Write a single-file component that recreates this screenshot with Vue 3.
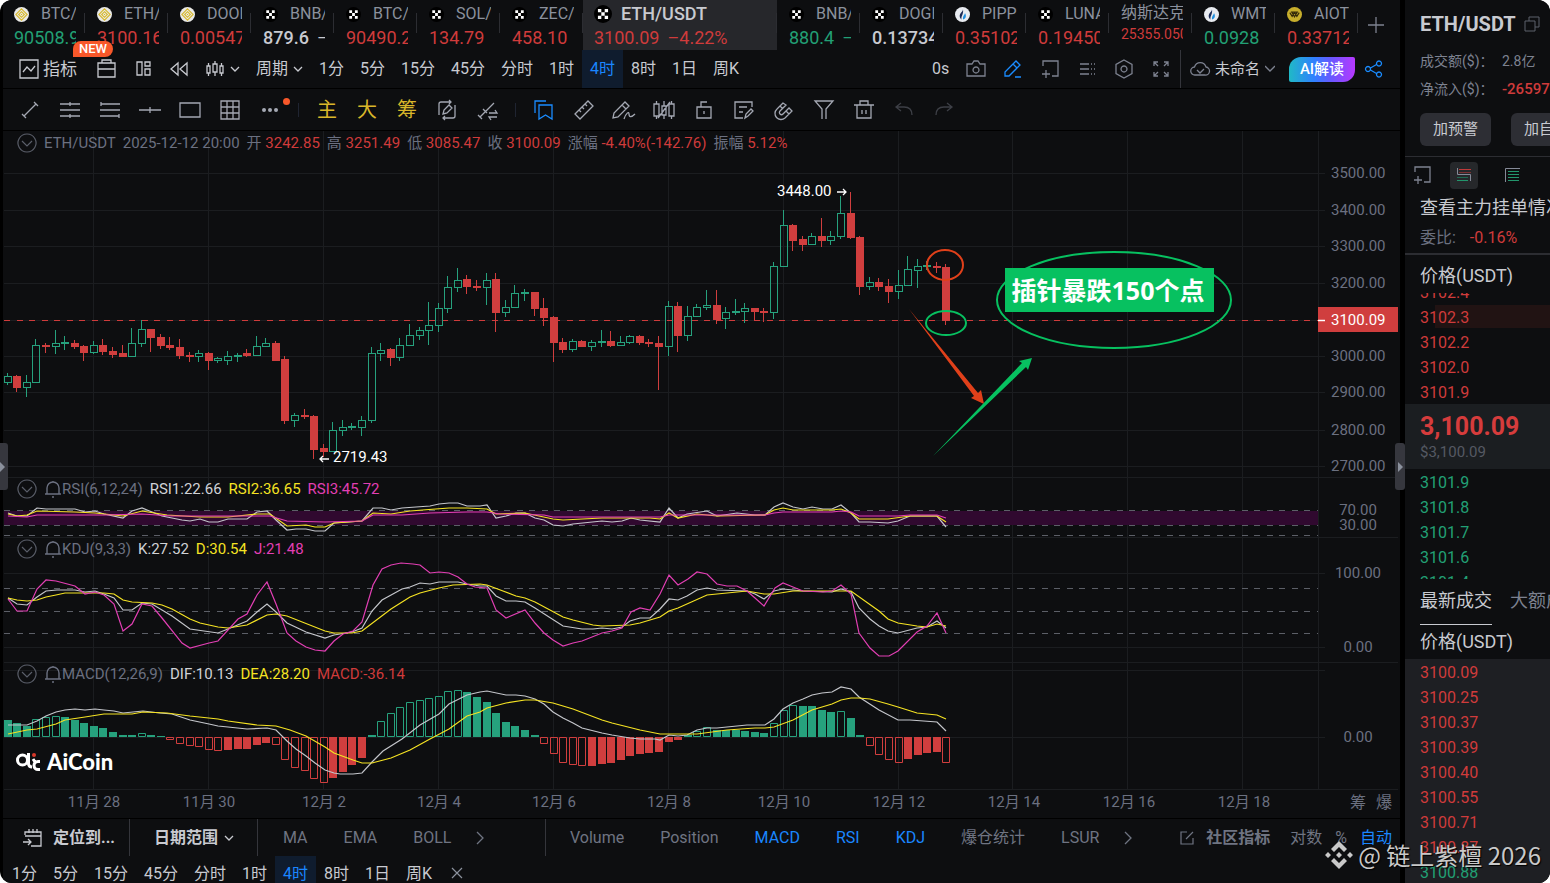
<template>
  <div class="terminal">
    <main class="workspace">
      <nav class="tickers">
        <a
          v-for="(t, index) in tickers"
          :key="index"
          href="#"
          class="ticker"
          :class="{ active: t.active, compact: t.compact }"
        >
          <span class="ticker-name">
            <svg v-if="t.logo" class="coin" viewBox="0 0 16 16" aria-hidden="true">
              <circle cx="8" cy="8" r="8" :fill="logoFill[t.logo]" />
              <g v-if="t.logo === 'bn'" fill="none" stroke="#d8b92c" stroke-width="1.2">
                <path d="M8 2 14 8 8 14 2 8ZM8 5l3 3-3 3-3-3Z" />
                <path d="M8 7.4v1.2" />
              </g>
              <path v-else-if="t.logo === 'ok'" fill="#fff" d="M3.5 3.5h3v3h-3zM9.500 3.500h3v3h-3zM6.500 6.500h3v3h-3zM3.500 9.500h3v3h-3zM9.500 9.500h3v3h-3z" />
              <g v-else-if="t.logo === 'hb'">
                <path fill="#1b2a55" d="M8.500 2c.4 2.500-3.500 4-3.500 7.500 0 1.800 1 3 2 3.700C6 10 9.500 8 8.500 2Z" />
                <path fill="#1f8fe0" d="M10.600 6.500c0 2-2.600 3-2 6.800 1.700-.3 3-1.700 3-3.700 0-1.300-.4-2.300-1-3.100Z" />
              </g>
              <path v-else fill="none" stroke="#33290a" stroke-width="1.200" d="M3 6l2.500 4L8 6l2.500 4L13 6M5 5.500h6L8 10.500Z" />
            </svg>
            <span>{{ t.name }}</span>
          </span>
          <span class="ticker-price" :class="t.tone">{{ t.price }}<i v-if="t.change">{{ t.change }}</i></span>
        </a>
        <button class="add-ticker" aria-label="添加">
          <svg class="icon" viewBox="0 0 20 20"><path d="M10 2V18M2 10H18" /></svg>
        </button>
      </nav>

      <div class="toolbar">
        <button class="indicator-btn">
          <svg class="icon" viewBox="0 0 20 20"><path :d="icons.chart" /></svg>
          指标
          <span class="new-badge">NEW</span>
        </button>
        <button v-for="name in ['briefcase', 'layout', 'rewind']" :key="name" class="icon-btn" :aria-label="name">
          <svg class="icon" viewBox="0 0 20 20"><path :d="icons[name]" /></svg>
        </button>
        <button class="menu-btn" aria-label="kline">
          <svg class="icon" viewBox="0 0 20 20"><path :d="icons.kline" /></svg>
          <svg class="chevron" viewBox="0 0 10 10"><path d="M1 3l4 4 4-4" /></svg>
        </button>
        <button class="menu-btn period-menu">
          周期
          <svg class="chevron" viewBox="0 0 10 10"><path d="M1 3l4 4 4-4" /></svg>
        </button>
        <button v-for="p in periods" :key="p" class="period" :class="{ on: p === period }" @click="period = p">{{ p }}</button>

        <div class="toolbar-right">
          <span class="countdown">0s</span>
          <button
            v-for="name in ['camera', 'pencil', 'addBox', 'list', 'hex', 'expand']"
            :key="name"
            class="icon-btn wide muted"
            :class="{ blue: name === 'pencil' }"
            :aria-label="name"
          >
            <svg class="icon" viewBox="0 0 20 20"><path :d="icons[name]" /></svg>
          </button>
          <button class="layout-btn">
            <svg class="icon muted" viewBox="0 0 20 20"><path :d="icons.cloud" /></svg>
            未命名
            <svg class="chevron muted" viewBox="0 0 10 10"><path d="M0 2l5 5 5-5" /></svg>
          </button>
          <button class="ai-btn">AI解读</button>
          <button class="share-btn" aria-label="share">
            <svg class="icon blue" viewBox="0 0 20 20"><path :d="icons.share" /></svg>
          </button>
        </div>
      </div>

      <div class="drawbar">
        <template v-for="tool in tools" :key="tool">
          <span v-if="tool.startsWith('|')" class="separator"></span>
          <button v-else-if="tool.length === 1" class="draw-btn gold">{{ tool }}</button>
          <button v-else class="draw-btn" :class="tool" :aria-label="tool">
            <svg class="icon" viewBox="0 0 20 20"><path :d="icons[tool]" /></svg>
            <span v-if="tool === 'more'" class="dot"></span>
          </button>
        </template>
      </div>

      <section class="pane">
        <svg class="plot" viewBox="3 131 1397 346">
          <path class="grid" :d="gridColumns(131, 477)" />
          <path class="grid" :d="gridRows([173, 210, 246, 283, 320, 356, 392, 430, 466])" />
          <path class="last-price" d="M4 320.500H1318" />
          <g v-for="(c, i) in candles" :key="i" :class="c[0] ? 'up' : 'down'">
            <path :d="`M${x(i) - 0.5} ${c[1]}V${c[2]}M${x(i) - 0.5} ${c[3]}V${c[4]}`" />
            <rect :x="x(i) - 3.5" :y="c[2] + 0.5" width="7" :height="Math.max(c[3] - c[2] - 1, 1)" />
          </g>
          <text class="mark" x="777" y="196">3448.00</text>
          <path class="mark-arrow" d="M837 192H846M843 189l3 3-3 3" />
          <text class="mark" x="333" y="462">2719.43</text>
          <path class="mark-arrow" d="M329 459H320M323 456l-3 3 3 3" />
          <text v-for="(p, i) in priceTicks" :key="p" class="tick" x="1331" :y="priceTickY[i]">{{ p }}</text>
          <rect x="1318" y="307" width="80" height="25" fill="#d03e3e" />
          <path d="M1318 320.500H1325" stroke="#fff" stroke-width="1.500" />
          <text class="tick-now" x="1331" y="325">3100.09</text>
          <ellipse class="note orange" cx="945" cy="265" rx="18" ry="15" />
          <ellipse class="note" cx="946" cy="323" rx="20" ry="12" />
          <ellipse class="note" cx="1114" cy="300" rx="117" ry="48" />
          <rect x="1005" y="268" width="209" height="44" fill="#07c160" />
          <text class="note-text" x="1108" y="300">插针暴跌150个点</text>
          <path fill="#e0401a" d="M909 309 978 393 981 390 984 404 971 398 974 396Z" />
          <path fill="#07c160" d="M933 456 1022 363 1019 361 1032 358 1028 370 1026 367Z" />
        </svg>
        <div class="legend">
          <svg class="fold" viewBox="0 0 20 20"><path :d="icons.fold" /></svg>
          <span>ETH/USDT</span>
          <span>2025-12-12 20:00</span>
          <span v-for="o in ohlc" :key="o[0]">{{ o[0] }} <b class="red">{{ o[1] }}</b></span>
        </div>
      </section>

      <section v-for="pane in panes" :key="pane.id" class="pane">
        <svg class="plot" :viewBox="`3 ${pane.top} 1397 ${pane.height}`">
          <path class="grid" :d="`M4 ${pane.top + 0.5}H1398`" />
          <path class="grid" :d="gridColumns(pane.top, pane.top + pane.height)" />
          <path class="grid" :d="gridRows(pane.rows)" />
          <rect v-if="pane.id === 'rsi'" x="4" y="511" width="1314" height="14" fill="#30092f" />
          <path v-for="y in pane.dashes" :key="y" class="dash" :d="`M4 ${y + 0.5}H1318`" />
          <template v-if="pane.id === 'macd'">
            <path
              v-for="(h, i) in bars"
              :key="i"
              class="bar"
              :class="[h > 0 ? 'pos' : 'neg', { hollow: hollow.includes(i) }]"
              :d="barPath(h, i)"
            />
          </template>
          <polyline v-for="line in pane.lines" :key="line.color" :points="line.points" :stroke="line.color" class="series" />
          <text v-for="t in pane.ticks" :key="t[1]" class="tick middle" x="1358" :y="t[1]">{{ t[0] }}</text>
          <g v-if="pane.id === 'macd'" class="brand">
            <circle cx="22.500" cy="760" r="5" />
            <path d="M28.500 753V764Q29 767 32 767" />
            <path d="M40 761.500H38a4 4 0 0 0 0 8H40M33 759l2 3" />
            <circle class="brand-dot" cx="34" cy="755" r="2" />
            <text x="47" y="770">AiCoin</text>
          </g>
        </svg>
        <div class="legend">
          <svg class="fold" viewBox="0 0 20 20"><path :d="icons.fold" /></svg>
          <span class="legend-name">
            <svg class="bell" viewBox="0 0 18 18"><path d="M1 14H17M3 14V8a6 6 0 0 1 12 0v6M8 17h2M9 2V1" /></svg>
            {{ pane.name }}
          </span>
          <span v-for="v in pane.values" :key="v[0]" :class="v[1]">{{ v[0] }}</span>
        </div>
      </section>

      <svg class="plot" viewBox="3 789 1397 29">
        <path class="grid" d="M4 789.500H1398" />
        <text v-for="(d, i) in dates" :key="d" class="tick middle" :x="94 + i * 115" y="807">{{ d }}</text>
        <text class="tick large" x="1350" y="808">筹</text>
        <text class="tick large" x="1376" y="808">爆</text>
      </svg>

      <div class="bottombar">
        <button class="locate">
          <svg class="icon" viewBox="0 0 20 20"><path :d="icons.locate" /></svg>
          定位到...
        </button>
        <button class="range">
          日期范围
          <svg class="chevron" viewBox="0 0 10 10"><path d="M1 3l4 4 4-4" /></svg>
        </button>
        <div class="studies main-studies">
          <button v-for="s in ['MA', 'EMA', 'BOLL']" :key="s">{{ s }}</button>
          <svg class="next" viewBox="0 0 8 14"><path d="M1 1l6 6-6 6" /></svg>
        </div>
        <div class="studies">
          <button v-for="s in subStudies" :key="s" :class="{ on: activeStudies.includes(s) }">{{ s }}</button>
          <svg class="next" viewBox="0 0 8 14"><path d="M1 1l6 6-6 6" /></svg>
        </div>
        <div class="scale">
          <button class="community">
            <svg viewBox="0 0 14 14"><path d="M7 1H1V13H13V7M6 8l7-7" /></svg>
            社区指标
          </button>
          <button>对数</button>
          <button>%</button>
          <button class="on">自动</button>
        </div>
      </div>

      <div class="quick-periods">
        <button v-for="p in periods" :key="p" class="period" :class="{ on: p === period }" @click="period = p">{{ p }}</button>
        <button class="close" aria-label="close">
          <svg viewBox="0 0 12 12"><path d="M1 1l10 10M11 1 1 11" /></svg>
        </button>
      </div>
    </main>

    <aside class="sidebar">
      <h1>
        ETH/USDT
        <svg viewBox="0 0 16 16"><path d="M1 5H11V15H1ZM5 5V1H15V11H11" /></svg>
      </h1>
      <p class="stat"><span>成交额($)：</span><span>2.8亿</span></p>
      <p class="stat"><span>净流入($)：</span><b class="red">-26597</b></p>
      <div class="actions">
        <button>加预警</button>
        <button>加自选</button>
      </div>
      <div class="modes">
        <button aria-label="add"><svg class="icon" viewBox="0 0 20 20"><path :d="icons.addBox" /></svg></button>
        <button class="selected" aria-label="both">
          <svg viewBox="0 0 16 16"><path d="M1.500 1V7.500H14.500V14" stroke="#858a98" /><path d="M3 2.500H15" stroke="#c03a3a" /><path d="M3 5.500H15" stroke="#7c2f31" /><path d="M1 10.500H12" stroke="#1e6a50" /><path d="M1 13.500H12" stroke="#23956c" /></svg>
        </button>
        <button aria-label="bids">
          <svg viewBox="0 0 16 16"><path d="M1.500 15V1.500H16" stroke="#858a98" /><path d="M4 4.500H15M4 7.500H15M4 10.500H15M4 13.500H15" stroke="#23956c" /></svg>
        </button>
      </div>
      <p class="whale">查看主力挂单情况</p>
      <p class="ratio">委比: <b class="red">-0.16%</b></p>
      <h2 class="book-head">价格(USDT)</h2>
      <ul class="book asks">
        <li v-for="p in asks" :key="p" :class="{ depth: p === '3102.3' }">{{ p }}</li>
      </ul>
      <div class="last">
        <strong>3,100.09</strong>
        <span>$3,100.09</span>
      </div>
      <ul class="book bids">
        <li v-for="p in bids" :key="p">{{ p }}</li>
      </ul>
      <div class="tabs">
        <button class="current">最新成交</button>
        <button>大额成交</button>
      </div>
      <h2 class="trades-head">价格(USDT)</h2>
      <ul class="book trades">
        <li v-for="(p, i) in trades" :key="p" :class="{ buy: i === trades.length - 1 }">{{ p }}</li>
      </ul>
    </aside>

    <button class="handle left" aria-label="expand left"><svg viewBox="0 0 5 10"><path d="M0 0 5 5 0 10Z" /></svg></button>
    <button class="handle right" aria-label="collapse right"><svg viewBox="0 0 5 10"><path d="M0 0 5 5 0 10Z" /></svg></button>

    <div class="watermark">
      <svg viewBox="0 0 28 28">
        <path d="M14 0 22 8 19 11 14 6 9 11 6 8ZM14 28 22 20 19 17 14 22 9 17 6 20ZM3 11 6 14 3 17 0 14ZM25 11 28 14 25 17 22 14ZM14 11 17 14 14 17 11 14Z" />
      </svg>
      @ 链上紫檀 2026
    </div>
  </div>
</template>

<script setup>
import { ref } from 'vue'

const period = ref('4时')
const periods = ['1分', '5分', '15分', '45分', '分时', '1时', '4时', '8时', '1日', '周K']

const logoFill = { bn: '#e9e9e6', ok: '#000', hb: '#e8ebf0', wo: '#c7ae2c' }

const tickers = [
  { name: 'BTC/USDT', price: '90508.9', tone: 'green', logo: 'bn' },
  { name: 'ETH/USDT', price: '3100.16', tone: 'red', logo: 'bn' },
  { name: 'DOOD/USDT', price: '0.00547', tone: 'red', logo: 'bn' },
  { name: 'BNB/USDT', price: '879.6', change: '–0', tone: 'flat', logo: 'ok' },
  { name: 'BTC/USDT', price: '90490.2', tone: 'red', logo: 'ok' },
  { name: 'SOL/USDT', price: '134.79', tone: 'red', logo: 'ok' },
  { name: 'ZEC/USDT', price: '458.10', tone: 'red', logo: 'ok' },
  { name: 'ETH/USDT', price: '3100.09', change: '–4.22%', tone: 'red', logo: 'ok', active: true },
  { name: 'BNB/USDT', price: '880.4', change: '–0', tone: 'green', logo: 'ok' },
  { name: 'DOGE/USDT', price: '0.13734', tone: 'flat', logo: 'ok' },
  { name: 'PIPPIN', price: '0.35102', tone: 'red', logo: 'hb' },
  { name: 'LUNA/USDT', price: '0.19450', tone: 'red', logo: 'ok' },
  { name: '纳斯达克指数', price: '25355.050', tone: 'red', compact: true },
  { name: 'WMTX', price: '0.0928', tone: 'green', logo: 'hb' },
  { name: 'AIOT', price: '0.33712', tone: 'red', logo: 'wo' }
]

const icons = {
  chart: 'M1 1H19V19H1ZM4 13l4-5 4 4 4-5',
  briefcase: 'M1 4H18V18H1ZM1 10H18M5 4V1H14V4',
  layout: 'M4 3H9V16H4ZM12 3H17V7H12ZM12 10H17V16H12Z',
  rewind: 'M9 4 2 10 9 16ZM18 4 11 10 18 16Z',
  kline: 'M2 7H5V14H2ZM3.5 4V7M3.5 14V17M8 5H12V13H8ZM10 2V5M10 13V17M15 7H18V14H15ZM16.5 4V7M16.5 14V17',
  camera: 'M1 5H6L8 2H12L14 5H19V17H1ZM10 8a3 3 0 1 0 .01 0Z',
  pencil: 'M2 17V13L13 2 17 6 6 17ZM10 5l4 4M12 18H18',
  addBox: 'M3 7V2H18V17H12M6 11V19M2 15H10',
  list: 'M3 5H12M3 10H12M3 15H12M14 5h1M17 5h1M14 10h1M17 10h1M14 15h1M17 15h1',
  hex: 'M10 1 18 5.500V14.500L10 19 2 14.500V5.500ZM10 7a3 3 0 1 0 .01 0Z',
  expand: 'M3 7V3H7M13 3H17V7M17 13V17H13M7 17H3V13M3 3l4 4M17 3l-4 4M17 17l-4-4M3 17l4-4',
  cloud: 'M5 16a4 4 0 0 1-.5-8A6 6 0 0 1 16 8a4 4 0 0 1-1 8ZM7 11l3 3 4-4',
  share: 'M4 7.500a2.500 2.500 0 1 0 .01 0ZM15 2a2.500 2.500 0 1 0 .01 0ZM15 13a2.500 2.500 0 1 0 .01 0ZM6.500 9 12.500 5.500M6.500 11 12.500 14.500',
  line: 'M4 16 16 4M2 14l4 4M14 2l4 4',
  parallel: 'M0 4H20M0 10H20M0 16H20M10 2V6M10 14V18',
  channel: 'M1 4H20M0 10H20M0 16H19M1 2V6M19 14V18',
  level: 'M-1 10H21M10 7V13',
  rect: 'M0 3H20V17H0Z',
  table: 'M1 1H19V19H1ZM7 1V19M13 1V19M1 7H19M1 13H19',
  more: 'M4 10h.01M10 10h.01M16 10h.01',
  cycle: 'M14 2H4Q2 2 2 4V15M18 5V16Q18 18 16 18H6M12 0l2 2-2 2M8 16l-2 2 2 2M6 14l1-4 5-5 3 3-5 5Z',
  swap: 'M3 17 17 3M1 15l4 4M6 9l4 4M12 13h8l-2-3M20 17h-8l2 3',
  bookmark: 'M1 13V1H12M5 5H18V19L11.500 15 5 19Z',
  ruler: 'M1 14 14 1 19 6 6 19ZM5 10l2 2M8 7l2 2M11 4l2 2',
  scribble: 'M-1 18 0 13 11 2 15 6 4 17ZM8 5l4 4M10 19c2-6 5-8 5-5s2 4 6 0',
  compare: 'M0 4H5V16H0ZM2.500 1V4M2.500 16V19M8 6H12V15H8ZM10 1V6M10 15V19M15 4H20V16H15ZM17.500 1V4M17.500 16V19M4 18 16 2',
  lock: 'M3 7H17V18H3ZM10 11V14M7 7V2H13',
  note: 'M18 7V2H1V18H9M5 7H13M5 12H9M11 18l1-4 5-5 2 2-5 5Z',
  magnet: 'M9 3 3 9a6 6 0 0 0 8 9l7-7-3-3-6 6a2 2 0 0 1-3-3l6-6ZM6 6l3 3M12 11l3 3',
  funnel: 'M12 19V9L19 1H1L8 9V19',
  trash: 'M0 5H20M6 5V1H14V5M3 5V18H17V5M8 10V14M12 10V14',
  undo: 'M7 3 2 7l5 4M2 7H10Q18 7 18 15',
  redo: 'M13 3 18 7l-5 4M18 7H10Q2 7 2 15',
  locate: 'M2 7V4H18V18H8M2 8H18M6 1V5M10 1V5M14 1V5M0 14H8M5 11l3 3-3 3',
  fold: 'M10 1a9 9 0 1 0 .01 0ZM5 8l5 5 5-5'
}

const tools = [
  'line', 'parallel', 'channel', 'level', 'rect', 'table', 'more', '|1',
  '主', '大', '筹', 'cycle', 'swap', '|2',
  'bookmark', 'ruler', 'scribble', 'compare', 'lock', 'note', 'magnet', 'funnel', 'trash', 'undo', 'redo'
]

const ohlc = [
  ['开', '3242.85'],
  ['高', '3251.49'],
  ['低', '3085.47'],
  ['收', '3100.09'],
  ['涨幅', '-4.40%(-142.76)'],
  ['振幅', '5.12%']
]

const x = (i) => Math.round(7.6 + i * 9.58)
const gridColumns = (top, bottom) =>
  [93, 208, 323, 438, 553, 668, 783, 898, 1012, 1127, 1242, 1318].map((c) => `M${c + 0.5} ${top}V${bottom}`).join('')
const gridRows = (rows) => rows.map((r) => `M4 ${r + 0.5}H1325`).join('')

const priceTicks = ['3500.00', '3400.00', '3300.00', '3200.00', '3000.00', '2900.00', '2800.00', '2700.00']
const priceTickY = [178, 215, 251, 288, 361, 397, 435, 471]
const dates = ['11月 28', '11月 30', '12月 2', '12月 4', '12月 6', '12月 8', '12月 10', '12月 12', '12月 14', '12月 16', '12月 18']

// rising flag, high, body top, body bottom, low
const candles = [
  [1, 373, 376, 383, 385], [0, 375, 376, 388, 392], [1, 375, 382, 388, 397], [1, 339, 345, 383, 383],
  [0, 343, 345, 347, 353], [1, 330, 343, 347, 354], [1, 336, 342, 344, 350], [0, 340, 343, 347, 349],
  [0, 345, 346, 353, 361], [1, 341, 345, 353, 354], [0, 339, 345, 352, 355], [0, 347, 351, 355, 358],
  [0, 345, 353, 357, 357], [1, 328, 343, 357, 357], [1, 320, 329, 344, 347], [0, 329, 329, 338, 352],
  [0, 334, 337, 346, 349], [0, 337, 345, 348, 350], [0, 339, 347, 356, 359], [0, 352, 355, 357, 362],
  [1, 350, 353, 357, 362], [0, 352, 353, 361, 370], [1, 357, 358, 361, 363], [1, 351, 356, 361, 365],
  [1, 353, 355, 357, 362], [0, 349, 353, 356, 357], [1, 336, 346, 356, 356], [1, 338, 343, 347, 347],
  [0, 341, 343, 361, 361], [0, 356, 359, 421, 424], [1, 413, 415, 421, 427], [0, 409, 415, 417, 419],
  [0, 415, 416, 450, 459], [0, 444, 448, 452, 457], [1, 422, 430, 452, 452], [1, 420, 427, 431, 436],
  [1, 423, 426, 428, 430], [1, 416, 420, 428, 436], [1, 347, 353, 421, 423], [1, 343, 350, 354, 361],
  [0, 348, 349, 358, 366], [1, 338, 345, 358, 361], [1, 324, 335, 346, 346], [1, 327, 330, 336, 340],
  [1, 302, 325, 331, 345], [1, 303, 308, 326, 332], [1, 276, 287, 309, 313], [1, 268, 280, 288, 292],
  [0, 275, 279, 287, 294], [0, 280, 286, 288, 291], [1, 273, 280, 288, 305], [0, 273, 279, 313, 332],
  [1, 300, 307, 313, 317], [1, 285, 293, 308, 308], [1, 289, 292, 294, 301], [0, 292, 292, 309, 316],
  [0, 298, 308, 318, 326], [0, 316, 317, 343, 362], [0, 338, 342, 350, 353], [1, 339, 341, 350, 352],
  [0, 340, 341, 347, 347], [1, 340, 342, 347, 351], [1, 330, 341, 343, 347], [0, 331, 341, 346, 347],
  [1, 336, 342, 346, 346], [1, 335, 336, 343, 344], [0, 335, 336, 343, 345], [0, 339, 342, 344, 347],
  [0, 336, 343, 347, 390], [1, 301, 306, 347, 356], [0, 302, 306, 336, 352], [1, 306, 316, 336, 341],
  [1, 304, 307, 317, 317], [1, 290, 305, 308, 310], [0, 290, 305, 320, 324], [1, 307, 312, 319, 329],
  [1, 299, 311, 313, 315], [1, 303, 308, 312, 323], [0, 308, 308, 312, 321], [0, 308, 311, 313, 322],
  [1, 262, 266, 313, 319], [1, 210, 225, 267, 267], [0, 224, 225, 241, 251], [0, 236, 239, 245, 251],
  [1, 233, 236, 245, 245], [0, 218, 236, 241, 247], [1, 231, 236, 241, 245], [1, 196, 213, 237, 239],
  [0, 192, 213, 238, 239], [0, 236, 237, 287, 295], [1, 277, 282, 287, 290], [0, 278, 282, 287, 291],
  [0, 279, 286, 292, 303], [1, 270, 285, 292, 299], [1, 256, 269, 286, 286], [1, 259, 266, 271, 288],
  [1, 261, 265, 267, 270], [0, 262, 266, 268, 273], [0, 264, 267, 321, 325]
]

const bars = [
  17, 14, 11, 18, 20, 21, 20, 17, 14, 11, 9, 5, 2, 2, 4, 2, 1, -3, -7, -9, -10, -13, -14, -13, -12, -12, -8, -6, -8,
  -23, -31, -34, -42, -46, -41, -35, -28, -21, 2, 16, 24, 30, 35, 37, 39, 41, 46, 47, 45, 40, 35, 24, 15, 11, 7, 2,
  -7, -17, -26, -28, -29, -29, -27, -26, -23, -19, -17, -16, -15, -5, -3, 2, 6, 10, 7, 7, 7, 6, 5, 4, 14, 27, 32, 31,
  31, 27, 25, 26, 19, 2, -9, -18, -23, -26, -22, -18, -16, -15, -26
]
const hollow = [
  3, 4, 5, 14, 17, 18, 19, 20, 21, 22, 28, 29, 30, 31, 32, 33, 39, 40, 41, 42, 43, 44, 45, 46, 47,
  56, 57, 58, 59, 60, 72, 73, 80, 81, 82, 87, 90, 91, 92, 93, 98
]

// the outline is drawn inside the bar, so hollow bars are inset by half a stroke
const barPath = (h, i) => {
  const inset = hollow.includes(i) ? 0.5 : 0
  const left = x(i) - 4 + inset
  const top = (h > 0 ? 737 - h : 737) + inset
  const width = 8 - inset * 2
  return `M${left} ${top}h${width}v${Math.abs(h) - inset * 2}h${-width}Z`
}

const white = '#c4c6cb'
const yellow = '#f5e323'
const pink = '#e23fb4'

const panes = [
  {
    id: 'rsi',
    name: 'RSI(6,12,24)',
    top: 477,
    height: 60,
    rows: [],
    dashes: [510, 525, 535],
    ticks: [['70.00', 515], ['30.00', 530]],
    values: [['RSI1:22.66', 'white'], ['RSI2:36.65', 'yellow'], ['RSI3:45.72', 'pink']],
    lines: [
      {
        color: white,
        points: '8,513 17,516 27,516 37,508 46,509 75,509 85,512 95,511 104,514 123,518 132,511 142,508 162,516 182,520 190,521 200,519 209,522 218,522 228,519 247,519 257,512 267,511 276,520 287,530 296,529 306,529 315,531 325,531 334,523 362,521 373,508 382,508 391,510 402,508 430,506 439,504 449,503 458,503 467,506 480,506 487,505 496,518 506,516 516,513 525,513 535,518 544,520 553,525 563,526 573,524 602,521 612,522 622,521 631,518 640,520 660,522 669,508 678,518 687,514 707,511 717,516 737,513 755,515 765,515 774,507 783,503 793,507 803,509 812,507 823,509 832,509 841,505 851,513 859,522 870,522 888,523 898,521 910,516 937,516 946,527'
      },
      {
        color: yellow,
        points: '8,514 17,516 27,515 37,511 75,512 95,513 123,516 142,511 167,515 200,517 228,517 257,514 270,514 287,526 306,525 315,527 325,527 334,523 362,521 373,513 391,514 410,511 449,508 467,508 487,509 496,514 525,513 553,519 563,520 602,518 650,518 660,519 669,513 678,518 697,514 717,516 765,515 774,510 783,508 793,510 832,510 841,509 851,513 859,519 888,519 910,516 937,516 946,522'
      },
      {
        color: pink,
        points: '8,516 27,517 37,515 104,515 142,514 172,516 247,516 270,516 287,521 325,522 362,521 373,515 402,515 430,513 467,512 487,512 500,514 544,515 553,517 602,517 660,517 669,515 765,515 774,513 783,512 832,512 841,511 851,512 859,516 898,516 910,515 937,515 946,518'
      }
    ]
  },
  {
    id: 'kdj',
    name: 'KDJ(9,3,3)',
    top: 537,
    height: 125,
    rows: [573, 647],
    dashes: [588, 611, 633],
    ticks: [['100.00', 578], ['0.00', 652]],
    values: [['K:27.52', 'white'], ['D:30.54', 'yellow'], ['J:21.48', 'pink']],
    lines: [
      {
        color: white,
        points: '8,598 17,604 27,605 37,597 46,591 57,590 75,590 85,592 95,591 104,594 114,598 123,610 132,610 142,603 152,604 172,616 190,629 218,633 228,629 247,621 257,612 267,604 276,612 287,623 306,632 325,638 334,635 352,632 362,628 372,611 382,600 402,589 410,587 420,583 430,584 439,582 458,582 467,584 480,586 487,586 496,596 506,601 516,601 525,602 535,608 563,626 582,629 593,629 602,628 612,629 622,627 630,621 640,618 650,618 660,609 669,599 678,600 687,596 697,590 707,588 717,590 747,591 755,594 764,599 774,591 783,589 803,591 832,592 841,589 851,592 859,608 870,619 879,626 888,631 898,633 917,628 927,627 937,621 946,628'
      },
      {
        color: yellow,
        points: '8,598 17,600 27,601 37,600 46,597 56,595 65,593 104,593 114,594 123,600 132,602 152,603 162,605 172,609 190,619 200,623 218,627 228,628 247,625 267,615 276,614 287,616 325,631 334,633 352,633 362,631 391,609 410,597 420,593 439,588 453,585 480,584 487,585 516,596 525,598 535,602 563,617 573,620 593,625 602,626 630,625 640,623 650,620 660,617 669,611 678,608 707,595 727,593 747,591 764,594 774,594 793,591 851,591 879,611 888,619 898,623 917,626 927,627 937,624 946,626'
      },
      {
        color: pink,
        points: '8,599 17,611 27,611 37,589 46,580 56,581 75,586 85,594 95,592 104,595 114,604 123,631 132,624 142,604 152,606 162,618 182,643 190,648 209,643 218,641 238,619 247,614 257,595 267,582 276,604 287,633 296,641 306,647 315,650 325,651 334,641 343,634 353,631 362,622 373,585 382,569 391,565 401,563 413,564 420,565 430,573 439,572 449,573 458,577 467,584 475,587 487,588 496,610 506,618 525,610 535,623 544,633 553,640 563,646 573,643 582,641 592,637 602,633 612,631 622,628 631,612 640,608 650,610 660,594 669,575 678,585 688,579 697,572 707,574 717,584 727,586 737,586 747,591 755,598 764,606 775,588 783,583 793,587 803,591 823,592 832,591 841,585 851,594 859,633 870,648 879,656 889,656 898,651 917,632 927,626 937,613 946,633'
      }
    ]
  },
  {
    id: 'macd',
    name: 'MACD(12,26,9)',
    top: 662,
    height: 127,
    rows: [670, 737],
    dashes: [],
    ticks: [['0.00', 742]],
    values: [['DIF:10.13', 'white'], ['DEA:28.20', 'yellow'], ['MACD:-36.14', 'red']],
    lines: [
      {
        color: white,
        points: '8,725 27,725 37,721 46,716 56,712 65,710 75,709 85,710 95,709 104,710 114,711 123,713 143,711 160,713 172,714 190,720 209,724 218,726 228,727 247,729 267,728 276,730 287,741 296,749 306,756 315,763 325,770 334,773 340,774 353,774 362,773 372,762 383,751 402,739 420,725 439,714 449,704 467,695 480,692 487,691 506,695 516,695 525,696 535,699 544,704 553,712 563,718 573,723 582,728 602,733 612,735 630,738 640,739 655,739 660,740 669,735 678,736 687,735 697,730 707,728 717,728 727,727 747,725 765,725 774,719 783,709 793,703 803,699 812,695 822,693 832,692 841,687 851,689 859,697 879,710 898,720 910,720 937,722 946,731'
      },
      {
        color: yellow,
        points: '8,734 27,730 37,729 56,724 65,720 85,717 104,714 132,714 143,712 167,713 190,716 218,719 228,721 257,725 276,726 290,730 306,736 325,747 334,753 353,760 362,763 372,763 391,758 410,750 430,739 449,729 467,716 480,712 487,708 506,703 525,700 535,700 553,703 563,706 573,709 602,720 612,723 640,730 660,734 697,734 727,730 755,728 765,728 774,727 793,720 812,710 822,707 832,704 841,700 851,698 859,698 870,699 888,704 898,707 917,713 937,715 946,719'
      }
    ]
  }
]

const subStudies = ['Volume', 'Position', 'MACD', 'RSI', 'KDJ', '爆仓统计', 'LSUR']
const activeStudies = ['MACD', 'RSI', 'KDJ']

const asks = ['3102.4', '3102.3', '3102.2', '3102.0', '3101.9']
const bids = ['3101.9', '3101.8', '3101.7', '3101.6', '3101.4']
const trades = ['3100.09', '3100.25', '3100.37', '3100.39', '3100.40', '3100.55', '3100.71', '3100.87', '3100.88']
</script>

<style>
body {
  margin: 0;
  background-color: #FFFFFF;
}
</style>

<style scoped>
.terminal {
  position: relative;
  display: flex;
  gap: 5px;
  min-height: 100vh;
  padding-left: 3px;
  box-sizing: border-box;
  overflow: hidden;
  border-radius: 12px;
  background-color: #000000;
  color: #c8cad0;
  font-family: Roboto, "Noto Sans CJK SC", sans-serif;
  font-size: 16px;
  line-height: 1;
}

.workspace {
  flex: 1;
  min-width: 0;
  background-color: #0d0e10;
}

button {
  padding: 0;
  border: 0;
  background: none;
  color: inherit;
  font: inherit;
  white-space: nowrap;
  cursor: pointer;
}

svg {
  display: block;
  flex-shrink: 0;
  fill: none;
}

h1,
h2,
p,
ul {
  margin: 0;
  padding: 0;
  list-style: none;
}

b,
i {
  font-weight: 400;
  font-style: normal;
}

.icon {
  width: 20px;
  height: 20px;
  overflow: visible;
  stroke: currentColor;
  stroke-width: 1.3;
}

.chevron {
  width: 10px;
  height: 10px;
  stroke: currentColor;
  stroke-width: 1.3;
}

.red {
  color: #cf3b3b;
}

.green {
  color: #22a075;
}

.flat {
  color: #c8cad0;
}

.white {
  color: #d0d2d6;
}

.yellow {
  color: #f5e323;
}

.pink {
  color: #e23fb4;
}

.muted {
  color: #7d8290;
}

.blue {
  color: #1a8cff;
}

/* tickers */
.tickers {
  display: flex;
  height: 50px;
  overflow: hidden;
}

.ticker {
  position: relative;
  flex: 0 0 83px;
  min-width: 0;
  box-sizing: border-box;
  padding: 2px 9px 0 12px;
  color: #8b919d;
  text-decoration: none;
  white-space: nowrap;
}

.ticker:first-child {
  flex-basis: 82px;
  padding-left: 11px;
}

.ticker::after {
  content: "";
  position: absolute;
  right: 0;
  top: 13px;
  width: 1px;
  height: 20px;
  background-color: #2c2d32;
}

.ticker-name {
  display: flex;
  align-items: center;
  gap: 12px;
  height: 24px;
  overflow: hidden;
  line-height: 24px;
}

.coin {
  width: 15px;
  height: 15px;
}

.ticker-price {
  display: flex;
  gap: 8px;
  overflow: hidden;
  font-size: 18px;
  line-height: 24px;
}

.ticker-price.flat {
  font-weight: 500;
}

.ticker.active {
  flex-basis: 194px;
  background-color: #26272b;
  padding-left: 11px;
}

.ticker.active .ticker-name {
  gap: 9px;
  color: #c8cad0;
  font-size: 18px;
  font-weight: 500;
}

.ticker.active .coin {
  width: 18px;
  height: 18px;
}

.ticker.compact .ticker-name {
  height: 21px;
}

.ticker.compact .ticker-price {
  font-size: 14px;
  line-height: 22px;
}

.add-ticker {
  padding-left: 8px;
  color: #7d8290;
}

/* toolbars */
.toolbar {
  display: flex;
  height: 38px;
  padding-left: 16px;
  border-bottom: 1px solid #000000;
}

.toolbar button {
  display: flex;
  align-items: center;
  justify-content: center;
}

.toolbar .indicator-btn {
  position: relative;
  gap: 4px;
  margin-right: 12px;
  font-size: 17px;
}

.new-badge {
  position: absolute;
  left: 54px;
  top: -9px;
  padding: 0 6px;
  border-radius: 8px 8px 8px 0;
  background-color: #f8582a;
  color: #FFFFFF;
  font-size: 13px;
  font-weight: 500;
  line-height: 16px;
}

.icon-btn {
  width: 36px;
}

.icon-btn.wide {
  width: 37px;
}

.icon-btn.blue {
  color: #1a8cff;
}

.menu-btn {
  gap: 5px;
  padding: 0 8px;
}

.period {
  padding: 0 8px;
}

.period.on {
  background-color: #0f1c2e;
  color: #1a86ff;
}

.toolbar-right {
  display: flex;
  align-items: stretch;
  margin-left: auto;
  padding-right: 16px;
}

.countdown {
  width: 26px;
  line-height: 38px;
}

.toolbar .layout-btn {
  gap: 5px;
  margin-right: 14px;
  padding-left: 9px;
  border-left: 1px solid #34353b;
  font-size: 15px;
}

.toolbar .ai-btn {
  align-self: center;
  width: 66px;
  height: 25px;
  margin-right: 9px;
  border-radius: 12px 2px 12px 2px;
  background: linear-gradient(90deg, #20b9c6, #2f80ff 38%, #6b56ff 65%, #b738ff);
  color: #FFFFFF;
  font-size: 15px;
  font-weight: 500;
}

.drawbar {
  display: flex;
  height: 41px;
  padding-left: 7px;
  border-bottom: 1px solid #000000;
}

.draw-btn {
  position: relative;
  display: flex;
  align-items: center;
  justify-content: center;
  width: 40px;
  color: #a4a8b3;
}

.draw-btn.gold {
  color: #d9b62a;
  font-size: 20px;
}

.draw-btn.bookmark {
  color: #1a8cff;
}

.draw-btn.more .icon {
  stroke-width: 4;
  stroke-linecap: round;
}

.draw-btn.undo,
.draw-btn.redo {
  color: #3d3f46;
}

.dot {
  position: absolute;
  right: 0;
  top: 9px;
  width: 7px;
  height: 7px;
  border-radius: 50%;
  background-color: #f8582a;
}

.separator {
  align-self: center;
  width: 1px;
  height: 14px;
  margin: 0 8px;
  background-color: #1f2431;
}

/* chart */
.pane {
  display: grid;
}

.pane > * {
  grid-area: 1 / 1;
}

.plot {
  width: 100%;
  height: auto;
}

.legend {
  display: flex;
  align-items: center;
  align-self: start;
  gap: 7px;
  height: 24px;
  padding-left: 14px;
  color: #6b7080;
  font-size: 15px;
  white-space: nowrap;
}

.legend .red {
  color: #cf3b3b;
}

.fold {
  width: 20px;
  height: 20px;
  stroke: #5a5e69;
  stroke-width: 1.2;
}

.legend-name {
  display: flex;
  align-items: center;
}

.bell {
  width: 18px;
  height: 18px;
  stroke: #6b7080;
  stroke-width: 1.4;
}

.grid {
  stroke: #1b1d20;
}

.dash {
  stroke: #5c5f67;
  stroke-dasharray: 6 7 6 6;
}

.last-price {
  stroke: #cf3b3b;
  stroke-dasharray: 6 7 6 6;
}

.up {
  fill: none;
  stroke: #26a17d;
}

.down {
  fill: #d03e3e;
  stroke: #d03e3e;
}

.bar.pos {
  fill: #26a17d;
}

.bar.neg {
  fill: #d03e3e;
}

.bar.hollow {
  fill: none;
}

.bar.hollow.pos {
  stroke: #26a17d;
}

.bar.hollow.neg {
  stroke: #d03e3e;
}

.series {
  stroke-width: 1.2;
}

.tick {
  fill: #6b7080;
  font-size: 15px;
}

.tick.middle {
  text-anchor: middle;
}

.tick.large {
  font-size: 16px;
}

.tick-now,
.mark {
  fill: #FFFFFF;
  font-size: 15px;
}

.mark-arrow {
  stroke: #FFFFFF;
  stroke-width: 1.3;
}

.note {
  fill: none;
  stroke: #07c160;
  stroke-width: 2;
}

.note.orange {
  stroke: #e0401a;
}

.note-text {
  fill: #FFFFFF;
  font-family: "Open Sans", "Noto Sans CJK SC", sans-serif;
  font-size: 25px;
  font-weight: 700;
  text-anchor: middle;
}

.brand {
  stroke: #FFFFFF;
  stroke-width: 3;
}

.brand text {
  fill: #FFFFFF;
  stroke: none;
  font-family: Lato, sans-serif;
  font-size: 22px;
  font-weight: 900;
}

.brand-dot {
  fill: #d8392b;
  stroke: none;
}

/* bottom */
.bottombar {
  display: flex;
  height: 37px;
  border-top: 1px solid #000000;
  color: #6f7482;
}

.bottombar button {
  display: flex;
  align-items: center;
}

.bottombar .on {
  color: #1a86ff;
}

.bottombar .locate,
.bottombar .range {
  box-sizing: border-box;
  border-right: 1px solid #34353b;
  color: #c8cad0;
  font-weight: 700;
}

.locate {
  gap: 10px;
  width: 127px;
  padding-left: 20px;
}

.range {
  gap: 6px;
  width: 128px;
  padding-left: 24px;
}

.studies {
  display: flex;
  align-items: center;
  gap: 36px;
  padding-left: 24px;
}

.main-studies {
  box-sizing: border-box;
  width: 288px;
  padding-left: 25px;
  border-right: 1px solid #34353b;
}

.next {
  width: 8px;
  height: 14px;
  margin-left: -11px;
  stroke: currentColor;
  stroke-width: 1.3;
}

.scale {
  display: flex;
  gap: 13px;
  margin-left: auto;
  padding-right: 8px;
}

.bottombar .community {
  gap: 12px;
  margin-right: 7px;
  font-weight: 700;
}

.community svg {
  width: 14px;
  height: 14px;
  stroke: currentColor;
  stroke-width: 1.2;
}

.quick-periods {
  display: flex;
  height: 27px;
  padding-left: 1px;
  overflow: hidden;
}

.quick-periods .period {
  line-height: 36px;
}

.close {
  padding: 6px 0 0 11px;
}

.close svg {
  width: 12px;
  height: 12px;
  stroke: #8b919d;
  stroke-width: 1.2;
}

/* sidebar */
.sidebar {
  display: flex;
  flex: 0 0 145px;
  flex-direction: column;
  overflow: hidden;
  background-color: #0d0e10;
  white-space: nowrap;
}

.sidebar h1 {
  display: flex;
  align-items: center;
  gap: 8px;
  height: 47px;
  padding-left: 15px;
  font-size: 20px;
  font-weight: 700;
}

.sidebar h1 svg {
  width: 16px;
  height: 16px;
  stroke: #5c606b;
}

.stat {
  display: flex;
  height: 28px;
  padding-left: 15px;
  color: #7d8290;
  font-size: 14px;
  line-height: 28px;
}

.stat > * {
  flex-shrink: 0;
}

.stat span:first-child {
  width: 82px;
}

.stat b {
  font-size: 15px;
  font-weight: 500;
}

.actions {
  display: flex;
  gap: 20px;
  padding: 10px 0 10px 15px;
  border-bottom: 1px solid #2c2d32;
}

.actions button {
  flex: 0 0 71px;
  height: 33px;
  border-radius: 6px;
  background-color: #2d2e34;
  font-size: 15px;
}

.modes {
  display: flex;
  align-items: center;
  gap: 14px;
  height: 36px;
  padding-left: 3px;
  color: #7d8290;
}

.modes button {
  display: flex;
  align-items: center;
  justify-content: center;
  width: 28px;
  height: 27px;
  border-radius: 4px;
}

.modes button:last-child {
  margin-left: 6px;
}

.modes .selected {
  background-color: #26282b;
}

.modes button > svg:not(.icon) {
  width: 16px;
  height: 16px;
}

.whale {
  height: 29px;
  padding-left: 15px;
  font-size: 18px;
  line-height: 29px;
}

.ratio {
  height: 31px;
  padding-left: 15px;
  border-bottom: 2px solid #2c2d32;
  color: #6b7080;
  line-height: 32px;
}

.ratio b {
  margin-left: 10px;
}

.book-head,
.trades-head {
  box-sizing: border-box;
  padding-left: 15px;
  font-size: 18px;
  font-weight: 400;
}

.book-head {
  height: 38px;
  padding-top: 4px;
  line-height: 34px;
}

.trades-head {
  height: 34px;
  line-height: 34px;
}

.book {
  overflow: hidden;
}

.book li {
  box-sizing: border-box;
  flex: 0 0 25px;
  height: 25px;
  padding: 1px 0 0 15px;
  line-height: 25px;
}

.asks {
  display: flex;
  flex-direction: column;
  justify-content: flex-end;
  height: 111px;
  color: #cf3b3b;
}

.depth {
  background: linear-gradient(#211313, #211313) 30px 1px / 100% 23px no-repeat;
}

.last {
  box-sizing: border-box;
  height: 65px;
  padding: 8px 0 0 15px;
  background-color: #1b1e21;
}

.last strong {
  display: block;
  color: #d63c3c;
  font-size: 25px;
  line-height: 30px;
}

.last span {
  display: block;
  color: #555963;
  font-size: 15px;
  line-height: 20px;
}

.bids {
  height: 110px;
  color: #22a075;
}

.tabs {
  display: flex;
  gap: 18px;
  height: 46px;
  padding-left: 15px;
  color: #7d8290;
  font-size: 18px;
}

.tabs button {
  padding-bottom: 2px;
  border-bottom: 1px solid transparent;
}

.tabs .current {
  border-bottom-color: #c8cad0;
  color: #c8cad0;
}

.trades {
  flex: 1 1 0;
  min-height: 224px;
  background-color: #1e1f23;
  color: #cf3b3b;
}

.trades .buy {
  color: #22a075;
}

/* overlays */
.handle {
  position: absolute;
  top: 443px;
  height: 47px;
  background-color: #36373e;
}

.handle svg {
  width: 5px;
  height: 10px;
  fill: #8b919d;
}

.handle.left {
  left: 0;
  width: 8px;
  border-radius: 0 3px 3px 0;
}

.handle.right {
  right: 145px;
  width: 10px;
  padding-left: 3px;
  border-radius: 3px;
}

.watermark {
  position: absolute;
  right: 9px;
  bottom: 10px;
  display: flex;
  align-items: center;
  gap: 5px;
  color: #c9c9c9;
  font-family: "Noto Sans CJK SC", sans-serif;
  font-size: 24px;
  line-height: 36px;
  text-shadow: 1px 1px 1px #000000;
}

.watermark svg {
  width: 28px;
  height: 28px;
  fill: #c9c9c9;
}
</style>
